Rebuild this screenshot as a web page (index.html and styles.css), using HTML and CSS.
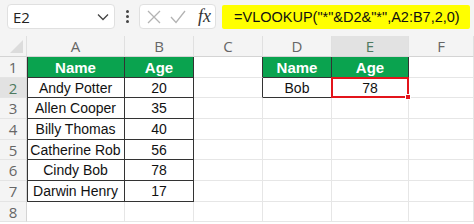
FILE: index.html
```html
<!DOCTYPE html>
<html lang="en">
<head>
  <meta charset="UTF-8">
  <title>VLOOKUP wildcard</title>
  <link rel="stylesheet" href="styles.css">
</head>
<body>
  <div class="topbar">
    <div class="namebox">
      <span>E2</span>
      <svg class="chev" width="12" height="8" viewBox="0 0 12 8"><polyline points="1,1.5 6,6.5 11,1.5" fill="none" stroke="#444" stroke-width="1.3"/></svg>
    </div>
    <div class="dots"><i></i><i></i><i></i></div>
    <div class="fxbox">
      <svg width="14" height="14" viewBox="0 0 14 14"><path d="M1 1 L13 13 M13 1 L1 13" stroke="#b3b3b3" stroke-width="1.3"/></svg>
      <svg width="16" height="14" viewBox="0 0 16 14"><polyline points="1,7 6,12.5 15,1" fill="none" stroke="#b3b3b3" stroke-width="1.3"/></svg>
      <span class="fx">fx</span>
    </div>
    <div class="formula">=VLOOKUP("*"&amp;D2&amp;"*",A2:B7,2,0)</div>
  </div>

  <div class="sheet">
    <!-- column headers -->
    <div class="colhead corner"></div>
    <div class="colhead">A</div>
    <div class="colhead">B</div>
    <div class="colhead">C</div>
    <div class="colhead">D</div>
    <div class="colhead sel">E</div>
    <div class="colhead">F</div>

    <!-- row 1 -->
    <div class="rowhead">1</div>
    <div class="cell head first">Name</div>
    <div class="cell head">Age</div>
    <div class="cell edge"></div>
    <div class="cell head">Name</div>
    <div class="cell head">Age</div>
    <div class="cell"></div>

    <!-- row 2 -->
    <div class="rowhead sel">2</div>
    <div class="cell data first">Andy Potter</div>
    <div class="cell data">20</div>
    <div class="cell edge"></div>
    <div class="cell data">Bob</div>
    <div class="cell data active">78</div>
    <div class="cell"></div>

    <!-- row 3 -->
    <div class="rowhead">3</div>
    <div class="cell data first">Allen Cooper</div>
    <div class="cell data">35</div>
    <div class="cell"></div>
    <div class="cell"></div>
    <div class="cell"></div>
    <div class="cell"></div>

    <!-- row 4 -->
    <div class="rowhead">4</div>
    <div class="cell data first">Billy Thomas</div>
    <div class="cell data">40</div>
    <div class="cell"></div>
    <div class="cell"></div>
    <div class="cell"></div>
    <div class="cell"></div>

    <!-- row 5 -->
    <div class="rowhead">5</div>
    <div class="cell data first">Catherine Rob</div>
    <div class="cell data">56</div>
    <div class="cell"></div>
    <div class="cell"></div>
    <div class="cell"></div>
    <div class="cell"></div>

    <!-- row 6 -->
    <div class="rowhead">6</div>
    <div class="cell data first">Cindy Bob</div>
    <div class="cell data">78</div>
    <div class="cell"></div>
    <div class="cell"></div>
    <div class="cell"></div>
    <div class="cell"></div>

    <!-- row 7 -->
    <div class="rowhead">7</div>
    <div class="cell data first">Darwin Henry</div>
    <div class="cell data">17</div>
    <div class="cell"></div>
    <div class="cell"></div>
    <div class="cell"></div>
    <div class="cell"></div>

    <!-- row 8 -->
    <div class="rowhead">8</div>
    <div class="cell"></div>
    <div class="cell"></div>
    <div class="cell"></div>
    <div class="cell"></div>
    <div class="cell"></div>
    <div class="cell"></div>
  </div>
</body>
</html>
```

FILE: styles.css
```css
body {
  margin: 0;
  padding: 0;
  background: #fff;
  font-family: 'Liberation Sans', Arial, sans-serif;
  width: 474px;
  height: 224px;
  overflow: hidden;
}

.topbar {
  height: 36px;
  background: #f4f4f4;
  display: flex;
  align-items: flex-start;
  padding: 4px 0 0 7px;
  box-sizing: border-box;
}

.namebox {
  width: 108px;
  height: 25px;
  background: #fff;
  border: 1px solid #e0e0e0;
  border-radius: 4px;
  box-sizing: border-box;
  display: flex;
  align-items: center;
  justify-content: space-between;
  padding: 0 5px 0 5px;
  font-family: 'Open Sans', sans-serif;
  font-size: 15px;
  color: #222;
}

.dots {
  width: 24px;
  height: 25px;
  display: flex;
  flex-direction: column;
  align-items: center;
  justify-content: center;
  gap: 2px;
}

.dots i {
  width: 3px;
  height: 3px;
  background: #444;
  border-radius: 50%;
}

.fxbox {
  width: 77px;
  height: 25px;
  background: #fff;
  border: 1px solid #e0e0e0;
  border-radius: 4px;
  box-sizing: border-box;
  display: flex;
  align-items: center;
  gap: 9px;
  padding-left: 7px;
}

.fx {
  font-family: 'Liberation Serif', serif;
  font-style: italic;
  font-size: 18px;
  color: #333;
  margin-left: 3px;
}

.formula {
  margin-left: 6px;
  width: 248px;
  height: 24px;
  margin-top: 1px;
  background: #ffff00;
  border-radius: 2px;
  box-sizing: border-box;
  padding-left: 12px;
  font-size: 14.5px;
  line-height: 24px;
  color: #111;
}

.sheet {
  display: grid;
  grid-template-columns: 27px 98px 69px 69px 69px 77px 65px;
  grid-template-rows: 21px 21px 20px 21px 21px 20px 21px 21px 20px;
}

.colhead {
  background: #f4f4f4;
  border-right: 1px solid #e0e0e0;
  border-bottom: 1px solid #d4d4d4;
  box-sizing: border-box;
  font-family: 'Open Sans', sans-serif;
  font-size: 15px;
  color: #666;
  text-align: center;
  line-height: 21px;
}

.colhead.sel {
  background: #e2e2e2;
  color: #4d7a60;
}

.corner {
  position: relative;
}

.corner::after {
  content: "";
  position: absolute;
  right: 3px;
  bottom: 3px;
  border-left: 13px solid transparent;
  border-bottom: 13px solid #dcdcdc;
}

.rowhead {
  background: #f4f4f4;
  border-right: 1px solid #d4d4d4;
  border-bottom: 1px solid #e4e4e4;
  box-sizing: border-box;
  font-family: 'Open Sans', sans-serif;
  font-size: 15px;
  color: #666;
  text-align: center;
  display: flex;
  align-items: center;
  justify-content: center;
}

.rowhead.sel {
  background: #e2e2e2;
  color: #4d7a60;
}

.cell {
  border-right: 1px solid #e6e6e6;
  border-bottom: 1px solid #e6e6e6;
  box-sizing: border-box;
  font-size: 14px;
  text-align: center;
  display: flex;
  align-items: center;
  justify-content: center;
  color: #111;
}

.cell.head {
  background: #0aa34f;
  color: #fff;
  font-weight: bold;
  font-size: 15px;
  border-right-color: #333;
  border-bottom-color: #333;
}

.cell.data {
  border-right-color: #333;
  border-bottom-color: #333;
}

.cell.first,
.cell.data.first {
  box-shadow: inset 1px 0 0 #333;
}

.cell.edge {
  border-right-color: #333;
}

.cell.active {
  position: relative;
}

.cell.active::after {
  content: "";
  position: absolute;
  left: -1px;
  top: -1px;
  right: -1px;
  bottom: -1px;
  border: 2px solid #e3141b;
}

.cell.active::before {
  content: "";
  position: absolute;
  right: -3px;
  bottom: -3px;
  width: 4px;
  height: 4px;
  background: #e3141b;
  border: 1px solid #fff;
  z-index: 1;
}
```
